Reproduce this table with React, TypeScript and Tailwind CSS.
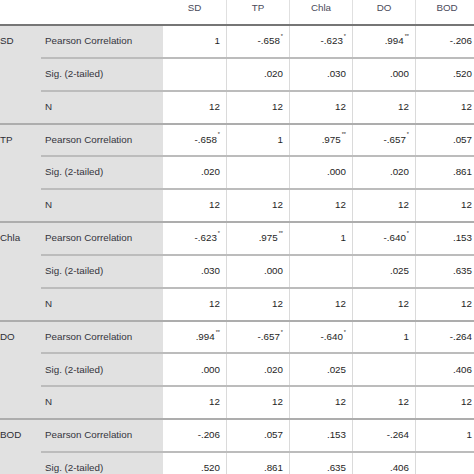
const cols = ['SD', 'TP', 'Chla', 'DO', 'BOD'];

type Cell = { v: string; sig?: string };

const groups: { name: string; r: Cell[]; p: Cell[]; n: Cell[] }[] = [
  {
    name: 'SD',
    r: [{ v: '1' }, { v: '-.658', sig: '*' }, { v: '-.623', sig: '*' }, { v: '.994', sig: '**' }, { v: '-.206' }],
    p: [{ v: '' }, { v: '.020' }, { v: '.030' }, { v: '.000' }, { v: '.520' }],
    n: [{ v: '12' }, { v: '12' }, { v: '12' }, { v: '12' }, { v: '12' }],
  },
  {
    name: 'TP',
    r: [{ v: '-.658', sig: '*' }, { v: '1' }, { v: '.975', sig: '**' }, { v: '-.657', sig: '*' }, { v: '.057' }],
    p: [{ v: '.020' }, { v: '' }, { v: '.000' }, { v: '.020' }, { v: '.861' }],
    n: [{ v: '12' }, { v: '12' }, { v: '12' }, { v: '12' }, { v: '12' }],
  },
  {
    name: 'Chla',
    r: [{ v: '-.623', sig: '*' }, { v: '.975', sig: '**' }, { v: '1' }, { v: '-.640', sig: '*' }, { v: '.153' }],
    p: [{ v: '.030' }, { v: '.000' }, { v: '' }, { v: '.025' }, { v: '.635' }],
    n: [{ v: '12' }, { v: '12' }, { v: '12' }, { v: '12' }, { v: '12' }],
  },
  {
    name: 'DO',
    r: [{ v: '.994', sig: '**' }, { v: '-.657', sig: '*' }, { v: '-.640', sig: '*' }, { v: '1' }, { v: '-.264' }],
    p: [{ v: '.000' }, { v: '.020' }, { v: '.025' }, { v: '' }, { v: '.406' }],
    n: [{ v: '12' }, { v: '12' }, { v: '12' }, { v: '12' }, { v: '12' }],
  },
  {
    name: 'BOD',
    r: [{ v: '-.206' }, { v: '.057' }, { v: '.153' }, { v: '-.264' }, { v: '1' }],
    p: [{ v: '.520' }, { v: '.861' }, { v: '.635' }, { v: '.406' }, { v: '' }],
    n: [{ v: '12' }, { v: '12' }, { v: '12' }, { v: '12' }, { v: '12' }],
  },
];

const StatRow = ({ label, cells, first }: { label: string; cells: Cell[]; first: boolean }) => (
  <div className={`flex ${first ? 'h-[30.85px]' : 'h-[32.85px] border-t-2 border-[#bcbcbc]'}`}>
    <div className="w-[122px] shrink-0 bg-[#e1e1e1] pl-1 flex items-center text-[#34343c]">{label}</div>
    {cells.map((c, i) => (
      <div
        key={i}
        className={`w-[63px] shrink-0 flex items-center justify-end pr-[6px] text-[#1e1e1e] ${i > 0 ? 'border-l border-[#dadada]' : ''}`}
      >
        {c.v}
        {c.sig && <sup className="text-[5.5px] leading-none -mt-1 ml-[1px]">{c.sig}</sup>}
      </div>
    ))}
  </div>
);

export default function App() {
  return (
    <div className="w-[474px] h-[474px] overflow-hidden bg-white text-[9.8px]" style={{ fontFamily: '"Liberation Sans", Arial, sans-serif' }}>
      <div className="w-[478px]">
        <div className="flex h-[26px] border-b-2 border-[#767676]">
          <div className="w-[163px] shrink-0" />
          {cols.map((c, i) => (
            <div
              key={c}
              className={`w-[63px] shrink-0 text-center pt-[1px] text-[#4a4a5a] ${i > 0 ? 'border-l border-[#e0e0e0]' : ''}`}
            >
              {c}
            </div>
          ))}
        </div>
        {groups.map((g, gi) => (
          <div key={g.name} className={`flex ${gi > 0 ? 'border-t-2 border-[#adadad]' : ''}`}>
            <div className="w-[41px] shrink-0 bg-[#e1e1e1]">
              <div className="h-[30.85px] flex items-center text-[#2e2e36]">{g.name}</div>
            </div>
            <div className="flex flex-col">
              <StatRow label="Pearson Correlation" cells={g.r} first />
              <StatRow label="Sig. (2-tailed)" cells={g.p} first={false} />
              <StatRow label="N" cells={g.n} first={false} />
            </div>
          </div>
        ))}
      </div>
    </div>
  );
}
